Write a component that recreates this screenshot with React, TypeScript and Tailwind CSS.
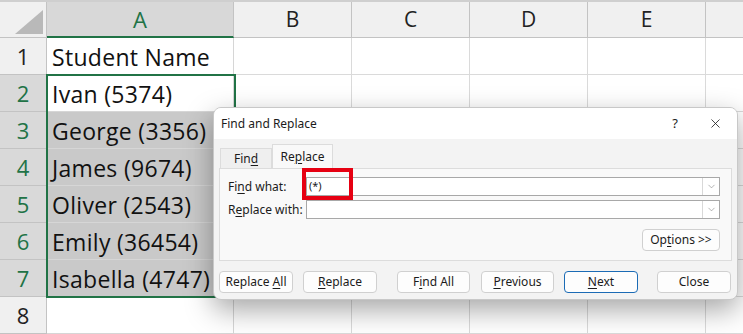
import { X, ChevronDown } from "lucide-react"

const columns = ["B", "C", "D", "E"]

const names = [
  "Student Name",
  "Ivan (5374)",
  "George (3356)",
  "James (9674)",
  "Oliver (2543)",
  "Emily (36454)",
  "Isabella (4747)",
  "",
]

function Key({ children }: { children: string }) {
  return <span className="underline underline-offset-2">{children}</span>
}

function Button({ children, primary = false, width = "w-[74px]" }: { children: React.ReactNode; primary?: boolean; width?: string }) {
  return (
    <div
      className={`${width} h-[22px] flex items-center justify-center rounded-[4px] bg-[#fdfdfd] text-[12px] text-[#1b1b1b] ${
        primary ? "border border-[#1b6bb5]" : "border border-[#d0d0d0]"
      }`}
    >
      {children}
    </div>
  )
}

function Sheet() {
  return (
    <div className="flex flex-col font-['Open_Sans',sans-serif]">
      {/* column headers */}
      <div className="flex h-[38px] border-t-[2px] border-[#cfcfcf] bg-[#f0f0f0]">
        <div className="w-[47px] relative border-r border-b border-[#c3c3c3]">
          <div className="absolute right-[3px] bottom-[3px] w-0 h-0 border-l-[28px] border-l-transparent border-b-[24px] border-b-[#b9b9b9]" />
        </div>
        <div className="w-[187px] flex items-center justify-center bg-[#d8d8d8] border-r border-[#c3c3c3] border-b-2 border-b-[#217346] text-[22px] text-[#217346]">
          A
        </div>
        {columns.map((c) => (
          <div key={c} className="w-[118px] flex items-center justify-center border-r border-b border-[#c3c3c3] text-[21px] text-[#222]">
            {c}
          </div>
        ))}
        <div className="flex-1 border-b border-[#c3c3c3]" />
      </div>

      {names.map((name, i) => {
        const row = i + 1
        const selected = row >= 2 && row <= 7
        return (
          <div key={row} className="flex h-[37px]">
            <div
              className={`w-[47px] flex items-center justify-center border-r border-b border-[#c3c3c3] text-[22px] ${
                selected ? "bg-[#d9d9d9] text-[#217346]" : "bg-[#f0f0f0] text-[#222]"
              }`}
            >
              {row}
            </div>
            <div
              className={`w-[187px] flex items-center pl-[5px] pt-[2px] border-r border-b border-[#d6d6d6] text-[23px] tracking-[0.3px] text-[#111] whitespace-nowrap ${
                row >= 3 && row <= 7 ? "bg-[#c9c9c9]" : "bg-white"
              }`}
            >
              {name}
            </div>
            {columns.map((c) => (
              <div key={c} className="w-[118px] border-r border-b border-[#dadada] bg-white" />
            ))}
            <div className="flex-1 border-b border-[#dadada] bg-white" />
          </div>
        )
      })}
    </div>
  )
}

function Dialog() {
  return (
    <div className="absolute left-[213px] top-[107px] w-[525px] h-[193px] rounded-[8px] bg-[#f3f3f3] border border-[#c8c8c8] shadow-[0_10px_28px_rgba(0,0,0,0.35)] font-['Noto_Sans',sans-serif] text-[12px] text-[#1b1b1b] flex flex-col overflow-hidden">
      {/* title bar */}
      <div className="h-[31px] bg-white flex items-center pl-[7px] shrink-0">
        <span className="flex-1">Find and Replace</span>
        <span className="w-[20px] text-center text-[13px] mr-[23px]">?</span>
        <X size={15} strokeWidth={1.3} className="mr-[14px]" />
      </div>

      {/* tabs */}
      <div className="flex items-end h-[29px] pl-[6px] shrink-0">
        <div className="w-[52px] h-[20px] flex items-center justify-center bg-[#efefef] border border-b-0 border-[#dcdcdc]">
          Fin<Key>d</Key>
        </div>
        <div className="w-[61px] h-[24px] flex items-center justify-center bg-[#f9f9f9] border border-b-0 border-[#dcdcdc]">
          Re<Key>p</Key>lace
        </div>
      </div>

      {/* tab panel */}
      <div className="mx-[5px] h-[93px] bg-[#f9f9f9] border border-[#dcdcdc] flex flex-col pl-[8px] pr-[11px] pt-[8px] shrink-0">
        <div className="flex items-center h-[19px]">
          <span className="w-[78px]">
            Fi<Key>n</Key>d what:
          </span>
          <div className="flex-1 h-[19px] bg-white border border-[#a8a8a8] flex items-center">
            <span className="flex-1 pl-[2px] text-[11px]">(*)</span>
            <div className="w-[17px] h-full border-l border-[#d8d8d8] flex items-center justify-center">
              <ChevronDown size={11} strokeWidth={1.2} className="text-[#777]" />
            </div>
          </div>
        </div>
        <div className="flex items-center h-[19px] mt-[4px]">
          <span className="w-[78px]">
            R<Key>e</Key>place with:
          </span>
          <div className="flex-1 h-[19px] bg-white border border-[#a8a8a8] flex items-center justify-end">
            <div className="w-[17px] h-full border-l border-[#d8d8d8] flex items-center justify-center">
              <ChevronDown size={11} strokeWidth={1.2} className="text-[#777]" />
            </div>
          </div>
        </div>
        <div className="flex justify-end mt-[10px]">
          <Button width="w-[78px]">
            <span>
              Op<Key>t</Key>ions &gt;&gt;
            </span>
          </Button>
        </div>
      </div>

      {/* buttons */}
      <div className="flex items-center mt-[10px] pl-[5px]">
        <Button>
          <span>
            Replace <Key>A</Key>ll
          </span>
        </Button>
        <div className="ml-[10px]">
          <Button>
            <span>
              <Key>R</Key>eplace
            </span>
          </Button>
        </div>
        <div className="ml-[20px]">
          <Button width="w-[73px]">
            <span>
              F<Key>i</Key>nd All
            </span>
          </Button>
        </div>
        <div className="ml-[11px]">
          <Button width="w-[73px]">
            <span>
              <Key>P</Key>revious
            </span>
          </Button>
        </div>
        <div className="ml-[10px]">
          <Button primary>
            <span>
              <Key>N</Key>ext
            </span>
          </Button>
        </div>
        <div className="ml-[19px]">
          <Button>Close</Button>
        </div>
      </div>
    </div>
  )
}

export default function App() {
  return (
    <div className="relative w-[743px] h-[334px] overflow-hidden bg-white">
      <Sheet />
      {/* active selection outline */}
      <div className="absolute left-[46px] top-[74px] w-[190px] h-[224px] border-2 border-[#217346] pointer-events-none" />
      <Dialog />
      {/* red highlight box */}
      <div className="absolute left-[302px] top-[168px] w-[51px] h-[32px] border-4 border-[#e60012]" />
    </div>
  )
}
